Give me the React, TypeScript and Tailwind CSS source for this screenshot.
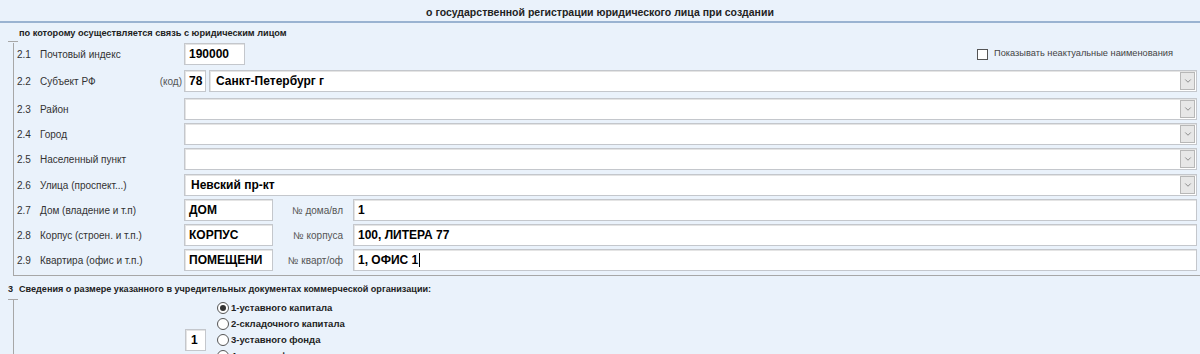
import React from 'react';
import { ChevronDown } from 'lucide-react';

const fieldBox =
  'h-[22px] bg-white border border-[#c4c7cc] shadow-[inset_1px_1px_0_#e4e4e4] flex items-center px-[4px] text-[12px] font-bold text-black leading-none';

const RowNum: React.FC<{ n: string }> = ({ n }) => (
  <div className="w-[23px] shrink-0 text-[10px] text-[#333]">{n}</div>
);

const Select: React.FC<{ value?: string; className?: string }> = ({ value, className }) => (
  <div className={`${fieldBox} justify-between pr-[1px] ${className ?? ''}`}>
    <span className="pl-[2px]">{value}</span>
    <div className="w-[15px] h-[18px] bg-[#e7e7e7] border border-[#b7b7b7] flex items-center justify-center">
      <ChevronDown className="w-[10px] h-[10px] text-[#555]" strokeWidth={1.5} />
    </div>
  </div>
);

const Radio: React.FC<{ label: string; checked?: boolean }> = ({ label, checked }) => (
  <div className="h-[16px] flex items-center gap-[2px]">
    <div className="w-[12px] h-[12px] rounded-full border border-[#555] bg-white flex items-center justify-center">
      {checked && <div className="w-[6px] h-[6px] rounded-full bg-[#333]" />}
    </div>
    <span className="text-[9.5px] font-bold text-[#222]">{label}</span>
  </div>
);

type SplitRow = { n: string; label: string; kind: string; kindLabel: string; value: string; caret?: boolean };

const splitRows: SplitRow[] = [
  { n: '2.7', label: 'Дом (владение и т.п)', kind: 'ДОМ', kindLabel: '№ дома/вл', value: '1' },
  { n: '2.8', label: 'Корпус (строен. и т.п.)', kind: 'КОРПУС', kindLabel: '№ корпуса', value: '100, ЛИТЕРА 77' },
  { n: '2.9', label: 'Квартира (офис и т.п.)', kind: 'ПОМЕЩЕНИ', kindLabel: '№ кварт/оф', value: '1, ОФИС 1', caret: true },
];

const App: React.FC = () => {
  return (
    <div className="w-full h-[354px] overflow-hidden bg-[#eaf2fb] font-['Liberation_Sans',Arial,sans-serif]">
      {/* header */}
      <div className="h-[21px] flex flex-col items-center justify-end">
        <div className="text-[10.5px] font-bold text-[#222] leading-[14px] pb-[2px]">
          о государственной регистрации юридического лица при создании
        </div>
      </div>
      <div className="h-[2px] bg-[#9ab3d1]" />

      <div className="pl-[19px] pt-[4px] text-[9.2px] font-bold text-[#222] leading-[12px]">
        по которому осуществляется связь с юридическим лицом
      </div>

      <div className="ml-[8px] mt-[2px] w-[10px] border-t border-[#a7a7a7]" />
      <div className="ml-[13px] border-l border-b border-[#a7a7a7] pl-[3px] pr-[3px] pb-[4px] text-[#333]">
        {/* 2.1 */}
        <div className="flex items-center mt-[1px]">
          <RowNum n="2.1" />
          <div className="w-[144px] shrink-0 text-[10px]">Почтовый индекс</div>
          <div className={`${fieldBox} w-[61px]`}>190000</div>
          <div className="ml-auto mr-[24px] flex items-center gap-[6px]">
            <div className="w-[11px] h-[11px] border border-[#555] bg-white" />
            <span className="text-[9.25px] text-[#444]">Показывать неактуальные наименования</span>
          </div>
        </div>

        {/* 2.2 */}
        <div className="flex items-center mt-[5px]">
          <RowNum n="2.2" />
          <div className="w-[144px] shrink-0 flex justify-between text-[10px] pr-[2px]">
            <span>Субъект РФ</span>
            <span className="text-[#555]">(код)</span>
          </div>
          <div className={`${fieldBox} w-[22px] px-[3px]`}>78</div>
          <Select value="Санкт-Петербург г" className="flex-1 ml-[3px]" />
        </div>

        {/* 2.3 - 2.6 */}
        <div className="flex items-center mt-[6px]">
          <RowNum n="2.3" />
          <div className="w-[144px] shrink-0 text-[10px]">Район</div>
          <Select className="flex-1" />
        </div>
        <div className="flex items-center mt-[3px]">
          <RowNum n="2.4" />
          <div className="w-[144px] shrink-0 text-[10px]">Город</div>
          <Select className="flex-1" />
        </div>
        <div className="flex items-center mt-[3px]">
          <RowNum n="2.5" />
          <div className="w-[144px] shrink-0 text-[10px]">Населенный пункт</div>
          <Select className="flex-1" />
        </div>
        <div className="flex items-center mt-[4px]">
          <RowNum n="2.6" />
          <div className="w-[144px] shrink-0 text-[10px]">Улица (проспект...)</div>
          <Select value="Невский пр-кт" className="flex-1" />
        </div>

        {/* 2.7 - 2.9 */}
        {splitRows.map((r) => (
          <div key={r.n} className="flex items-center mt-[3px]">
            <RowNum n={r.n} />
            <div className="w-[144px] shrink-0 text-[10px]">{r.label}</div>
            <div className={`${fieldBox} w-[89px]`}>{r.kind}</div>
            <div className="w-[80px] shrink-0 text-right pr-[10px] text-[10px] text-[#555]">{r.kindLabel}</div>
            <div className={`${fieldBox} flex-1`}>
              {r.value}
              {r.caret && <span className="inline-block w-px h-[14px] bg-black ml-[1px]" />}
            </div>
          </div>
        ))}
      </div>

      {/* section 3 */}
      <div className="flex items-center mt-[7px] text-[9.1px] font-bold text-[#222] leading-[12px]">
        <span className="w-[19px] pl-[8px]">3</span>
        <span>Сведения о размере указанного в учредительных документах коммерческой организации:</span>
      </div>
      <div className="ml-[8px] mt-[4px] w-[10px] border-t border-[#a7a7a7]" />
      <div className="ml-[13px] border-l border-[#a7a7a7] h-[80px] flex">
        <div className={`${fieldBox} w-[21px] h-[21px] ml-[171px] mt-[29px] px-[5px]`}>1</div>
        <div className="ml-[11px] flex flex-col">
          <Radio label="1-уставного капитала" checked />
          <Radio label="2-складочного капитала" />
          <Radio label="3-уставного фонда" />
          <Radio label="4-паевого фонда" />
        </div>
      </div>
    </div>
  );
};

export default App;
